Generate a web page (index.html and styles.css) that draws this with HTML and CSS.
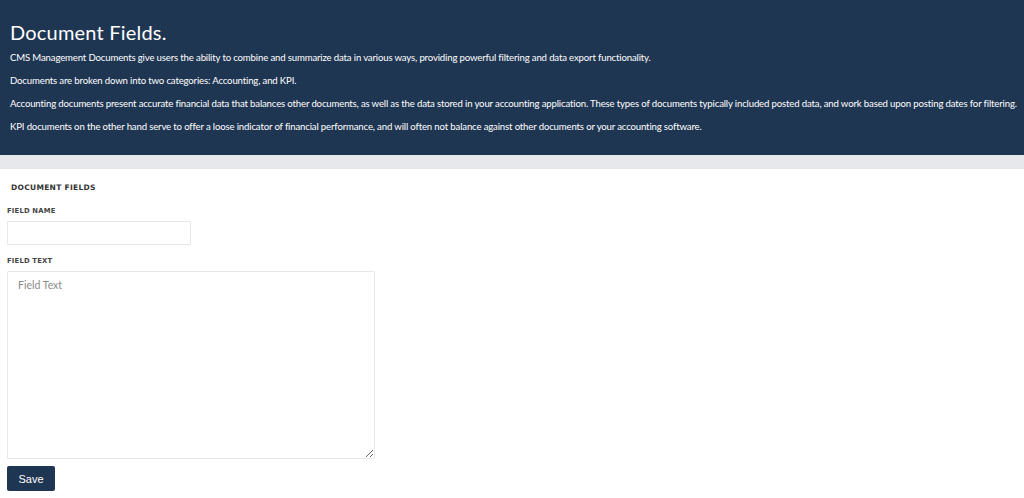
FILE: index.html
```html
<!DOCTYPE html>
<html>
<head>
<meta charset="utf-8">
<link rel="stylesheet" href="styles.css">
</head>
<body>
<header class="hero">
  <h1 class="hero-title">Document Fields.</h1>
  <p class="hero-text">CMS Management Documents give users the ability to combine and summarize data in various ways, providing powerful filtering and data export functionality.</p>
  <p class="hero-text">Documents are broken down into two categories: Accounting, and KPI.</p>
  <p class="hero-text">Accounting documents present accurate financial data that balances other documents, as well as the data stored in your accounting application. These types of documents typically included posted data, and work based upon posting dates for filtering.</p>
  <p class="hero-text">KPI documents on the other hand serve to offer a loose indicator of financial performance, and will often not balance against other documents or your accounting software.</p>
</header>
<div class="band"></div>
<main class="content">
  <h2 class="section-title">DOCUMENT FIELDS</h2>
  <form class="form">
    <label class="field-label" for="fname">FIELD NAME</label>
    <input class="field-input" id="fname" type="text">
    <label class="field-label" for="ftext">FIELD TEXT</label>
    <textarea class="field-area" id="ftext" placeholder="Field Text"></textarea>
    <button class="save-btn" type="button">Save</button>
  </form>
</main>
</body>
</html>
```
FILE: styles.css
```css
html, body {
  margin: 0;
  padding: 0;
  background: #ffffff;
}
body {
  font-family: Lato, "Open Sans", sans-serif;
}
.hero {
  background: #1f3653;
  color: #ffffff;
  height: 155px;
  box-sizing: border-box;
  padding: 18px 10px 0 10px;
}
.hero-title {
  margin: 0;
  font-weight: 400;
  font-size: 20px;
  line-height: 28px;
  letter-spacing: 0.2px;
}
.hero-text {
  margin: 0;
  font-size: 9.6px;
  line-height: 23px;
  letter-spacing: -0.155px;
  white-space: nowrap;
}
.band {
  height: 14px;
  background: #e6e8eb;
}
.content {
  padding: 0 7px;
}
.section-title {
  margin: 0 0 1px 0;
  padding: 13px 0 0 4px;
  font-family: "DejaVu Sans", sans-serif;
  font-weight: 700;
  font-size: 7.5px;
  line-height: 12px;
  letter-spacing: 0.3px;
  color: #333333;
}
.form {
  display: flex;
  flex-direction: column;
  align-items: flex-start;
}
.field-label {
  font-family: "DejaVu Sans", sans-serif;
  font-weight: 700;
  font-size: 6.8px;
  line-height: 10px;
  letter-spacing: 0.2px;
  color: #444444;
  margin-top: 11px;
  margin-bottom: 5px;
}
.field-input {
  width: 184px;
  height: 24px;
  box-sizing: border-box;
  border: 1px solid #e8e8e8;
  border-radius: 1px;
  margin: 0;
  padding: 0 10px;
  outline: none;
}
.field-area {
  width: 368px;
  height: 188px;
  box-sizing: border-box;
  border: 1px solid #e8e8e8;
  border-radius: 1px;
  margin: 0;
  padding: 5px 10px;
  font-family: Lato, sans-serif;
  font-size: 10.5px;
  line-height: 16px;
  color: #555555;
  resize: vertical;
}
.field-area::placeholder {
  color: #8a8a8a;
}
.save-btn {
  margin-top: 7px;
  width: 48px;
  height: 25px;
  background: #1f3653;
  color: #ffffff;
  border: none;
  border-radius: 2px;
  font-family: "Liberation Sans", Arial, sans-serif;
  font-size: 11px;
  padding: 0;
}
```
